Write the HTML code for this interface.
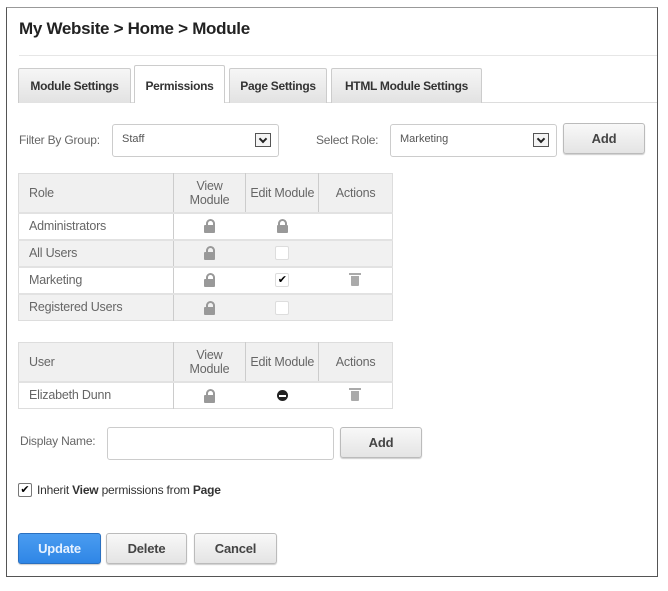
<!DOCTYPE html>
<html><head><style>
*{box-sizing:border-box;margin:0;padding:0}
body{width:668px;height:591px;background:#fff;font-family:"Liberation Sans",sans-serif;position:relative;overflow:hidden;color:#555}
.a{position:absolute}
.frame{left:6px;top:7px;width:652px;height:570px;border:1px solid #555;border-top-color:#999}
.title{left:19px;top:19px;font-size:17px;font-weight:bold;color:#222;letter-spacing:-0.3px}
.tab{top:68px;height:35px;background:linear-gradient(#f6f6f6,#e2e2e2);border:1px solid #ccc;border-bottom:none;font-size:12px;letter-spacing:-0.3px;font-weight:bold;color:#333;text-align:center;line-height:34px;border-radius:2px 2px 0 0}
.lbl{font-size:12px;color:#666;letter-spacing:-0.2px}
.sel{height:33px;border:1px solid #ccc;border-radius:3px;background:#fff;font-size:11px;color:#555;padding:8px 0 0 9px}
.arr{position:absolute;top:8px;width:16px;height:14px;border:1px solid #555;background:#f4f4f4}
.arr:after{content:"";position:absolute;left:4px;top:2px;width:4px;height:4px;border-right:2px solid #222;border-bottom:2px solid #222;transform:rotate(45deg)}
.btn{height:31px;border:1px solid #bbb;border-radius:3px;background:linear-gradient(#f8f8f8,#e4e4e4);font-size:13px;font-weight:bold;color:#444;text-align:center;line-height:29px;box-shadow:0 1px 1px #ccc;letter-spacing:-0.2px}
table{position:absolute;border-collapse:collapse;font-size:12.5px;color:#666;letter-spacing:-0.2px}
td{border-top:2px solid #e2e2e2;padding:0 10px;height:27px}
td:first-child{border-right:1px solid #ccc}
tr.h td{height:39px;background:#f0f0f0;border-right:1px solid #ccc;border-top:none}
tr.h td:last-child{border-right:none}
tr.g td{background:#f1f1f1}
td.c{text-align:center;padding:0}
.lock{display:inline-block;width:11px;height:14px;position:relative;vertical-align:middle}
.lock:before{content:"";position:absolute;left:1.5px;top:0;width:5px;height:6px;border:2px solid #999;border-bottom:none;border-radius:5px 5px 0 0}
.lock:after{content:"";position:absolute;left:0;top:6px;width:11px;height:8px;background:#999;border-radius:1px}
.cb{display:inline-block;width:14px;height:14px;border:1px solid #ddd;border-radius:2px;background:#fff;vertical-align:middle;font-size:11px;line-height:13px;color:#000}
.trash{display:inline-block;width:8px;height:10px;background:#aaa;vertical-align:middle;position:relative;border-radius:0 0 1px 1px}
.trash:before{content:"";position:absolute;left:-2px;top:-3px;width:12px;height:2px;background:#aaa}
</style></head><body>
<div class="a frame"></div>
<div class="a title">My Website &gt; Home &gt; Module</div>
<div class="a" style="left:19px;top:55px;width:638px;height:1px;background:#e6e6e6"></div>
<div class="a" style="left:19px;top:102px;width:638px;height:1px;background:#ddd"></div>
<div class="a tab" style="left:18px;width:113px">Module Settings</div>
<div class="a tab" style="left:134px;top:65px;height:38px;width:91px;background:#fff;line-height:40px">Permissions</div>
<div class="a tab" style="left:229px;width:98px">Page Settings</div>
<div class="a tab" style="left:331px;width:151px">HTML Module Settings</div>

<div class="a lbl" style="left:19px;top:133px">Filter By Group:</div>
<div class="a sel" style="left:112px;top:124px;width:167px">Staff<span class="arr" style="left:142px"></span></div>
<div class="a lbl" style="left:316px;top:133px">Select Role:</div>
<div class="a sel" style="left:390px;top:124px;width:167px">Marketing<span class="arr" style="left:142px"></span></div>
<div class="a btn" style="left:563px;top:123px;width:82px">Add</div>

<table style="left:18px;top:173px;width:375px;border:1px solid #ddd">
<colgroup><col style="width:155px"><col style="width:73px"><col style="width:73px"><col style="width:74px"></colgroup>
<tr class="h"><td>Role</td><td class="c" style="line-height:14px">View<br>Module</td><td class="c">Edit Module</td><td class="c">Actions</td></tr>
<tr><td>Administrators</td><td class="c"><span class="lock"></span></td><td class="c"><span class="lock"></span></td><td></td></tr>
<tr class="g"><td>All Users</td><td class="c"><span class="lock"></span></td><td class="c"><span class="cb"></span></td><td></td></tr>
<tr><td>Marketing</td><td class="c"><span class="lock"></span></td><td class="c"><span class="cb">&#10004;</span></td><td class="c"><span class="trash"></span></td></tr>
<tr class="g"><td>Registered Users</td><td class="c"><span class="lock"></span></td><td class="c"><span class="cb"></span></td><td></td></tr>
</table>

<table style="left:18px;top:342px;width:375px;border:1px solid #ddd">
<colgroup><col style="width:155px"><col style="width:73px"><col style="width:73px"><col style="width:74px"></colgroup>
<tr class="h"><td>User</td><td class="c" style="line-height:14px">View<br>Module</td><td class="c">Edit Module</td><td class="c">Actions</td></tr>
<tr><td>Elizabeth Dunn</td><td class="c"><span class="lock"></span></td><td class="c"><span style="display:inline-block;width:11px;height:11px;border-radius:50%;background:#222;vertical-align:middle;position:relative"><span style="position:absolute;left:2px;top:4.5px;width:7px;height:2px;background:#fff"></span></span></td><td class="c"><span class="trash"></span></td></tr>
</table>

<div class="a lbl" style="left:20px;top:434px">Display Name:</div>
<div class="a" style="left:107px;top:427px;width:227px;height:33px;border:1px solid #ccc;border-radius:3px"></div>
<div class="a btn" style="left:340px;top:427px;width:82px">Add</div>

<div class="a cb" style="left:18px;top:483px;border-color:#777;text-align:center">&#10004;</div>
<div class="a" style="left:37px;top:483px;font-size:12px;color:#333;letter-spacing:-0.2px">Inherit <b>View</b> permissions from <b>Page</b></div>

<div class="a btn" style="left:18px;top:533px;width:83px;background:linear-gradient(#4a9cf0,#2f86e6);border-color:#2a70c0;color:#e8f2ff">Update</div>
<div class="a btn" style="left:106px;top:533px;width:81px">Delete</div>
<div class="a btn" style="left:194px;top:533px;width:83px">Cancel</div>
</body></html>
